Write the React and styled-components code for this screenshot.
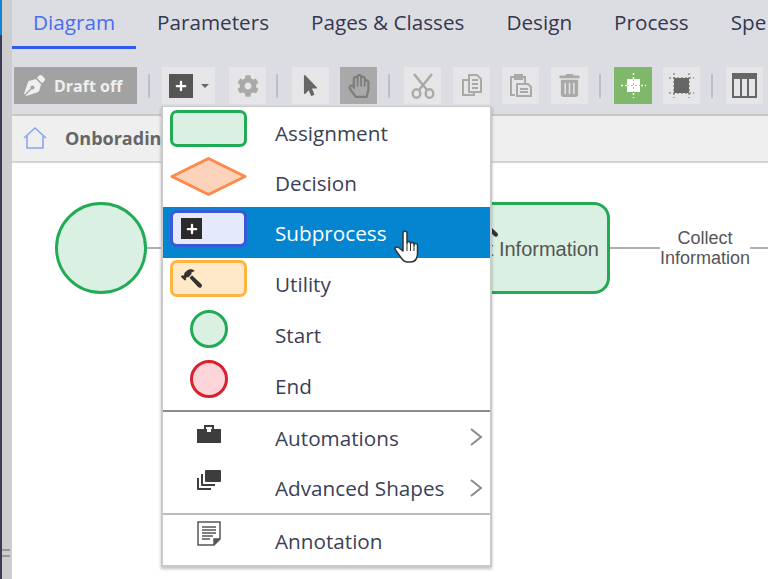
import React from 'react';
import styled, { createGlobalStyle } from 'styled-components';
import { FaPenNib, FaCog, FaMousePointer, FaRegHandPaper, FaTrashAlt, FaPlus, FaHammer } from 'react-icons/fa';

const GlobalStyle = createGlobalStyle`
  html, body {
    margin: 0;
    padding: 0;
    background: #fff;
    font-family: "Open Sans", "Liberation Sans", sans-serif;
  }
`;

const Page = styled.div`
  position: relative;
  display: flex;
  width: 768px;
  height: 579px;
  overflow: hidden;
`;

const Rail = styled.div`
  flex: 0 0 12px;
  box-sizing: border-box;
  border-left: 2px solid #3b3b55;
  background: #cdcdcd;
  display: flex;
  flex-direction: column;
  justify-content: flex-end;
  gap: 4px;
  padding: 0 2px 22px 0;
  i {
    display: block;
    height: 2px;
    background: #999;
  }
`;

const RailTop = styled.div`
  position: absolute;
  left: 0;
  top: 0;
  width: 2px;
  height: 35px;
  background: #0b84d8;
`;

const Main = styled.div`
  flex: 1;
  min-width: 0;
  display: flex;
  flex-direction: column;
`;

const TabBar = styled.div`
  display: flex;
  height: 49px;
  background: #dcdde3;
  white-space: nowrap;
`;

const Tab = styled.div`
  padding: 5px 21px 0;
  font-size: 20.7px;
  line-height: 34px;
  color: ${(p) => (p.$active ? '#4a6cf0' : '#34384f')};
  border-bottom: 3px solid ${(p) => (p.$active ? '#2f5bf0' : 'transparent')};
  box-sizing: border-box;
  height: 49px;
`;

const Toolbar = styled.div`
  display: flex;
  align-items: center;
  height: 67px;
  box-sizing: border-box;
  padding: 19px 0 11px 2px;
  background: #dcdde3;
  border-bottom: 2px solid #c8c8c8;
  white-space: nowrap;
`;

const DraftButton = styled.div`
  display: flex;
  align-items: center;
  gap: 9px;
  width: 123px;
  height: 37px;
  box-sizing: border-box;
  padding-left: 10px;
  background: #a2a2a2;
  color: #efefef;
  font-size: 16px;
  font-weight: 700;
`;

const Separator = styled.span`
  flex: none;
  width: 2px;
  height: 24px;
  margin: 0 ${(p) => p.$right ?? 12}px 0 ${(p) => p.$left ?? 11}px;
  background: #b9bfcc;
`;

const ToolButton = styled.div`
  flex: none;
  display: flex;
  align-items: center;
  justify-content: center;
  width: ${(p) => p.$width ?? 37}px;
  height: 37px;
  margin-right: ${(p) => p.$gap ?? 11}px;
  background: ${(p) => p.$bg ?? '#e6e6e8'};
  color: ${(p) => p.$color ?? '#a9a9a9'};
`;

const AddGlyph = styled.span`
  display: flex;
  align-items: center;
  justify-content: center;
  width: 24px;
  height: 24px;
  background: #555;
  color: #fff;
`;

const Caret = styled.span`
  margin-left: 8px;
  border-left: 4px solid transparent;
  border-right: 4px solid transparent;
  border-top: 4px solid #666;
`;

const Breadcrumb = styled.div`
  display: flex;
  align-items: center;
  gap: 18px;
  height: 47px;
  flex: none;
  box-sizing: border-box;
  padding: 0 0 2px 11px;
  background: #efefef;
  border-bottom: 2px solid #d4d4d4;
  font-size: 18px;
  font-weight: 700;
  color: #666;
  white-space: nowrap;
`;

const Canvas = styled.div`
  position: relative;
  flex: 1;
  background: #fff;
`;

const StartNode = styled.div`
  position: absolute;
  left: 43px;
  top: 39px;
  width: 92px;
  height: 92px;
  box-sizing: border-box;
  border-radius: 50%;
  border: 3px solid #22ab55;
  background: #daf0e2;
`;

const Connector = styled.div`
  position: absolute;
  left: ${(p) => p.$left}px;
  width: ${(p) => p.$width}px;
  top: 84px;
  height: 2px;
  background: #b0b0b0;
`;

const StepNode = styled.div`
  position: absolute;
  left: 420px;
  top: 39px;
  width: 178px;
  height: 92px;
  box-sizing: border-box;
  display: flex;
  align-items: center;
  justify-content: flex-end;
  padding: 2px 8px 0 0;
  border-radius: 16px;
  border: 3px solid #22ab55;
  background: #daf0e2;
  font-family: "Liberation Sans", Arial, sans-serif;
  font-size: 20px;
  color: #555;
  white-space: nowrap;
`;

const StepGlyph = styled.span`
  position: absolute;
  left: 42px;
  top: 12px;
  color: #333;
  display: flex;
  transform: scaleX(-1);
`;

const ConnectorLabel = styled.div`
  position: absolute;
  left: 638px;
  top: 65px;
  width: 110px;
  text-align: center;
  font-family: "Liberation Sans", Arial, sans-serif;
  font-size: 18px;
  line-height: 20px;
  color: #555;
`;

const Menu = styled.div`
  position: absolute;
  left: 161px;
  top: 106px;
  width: 331px;
  box-sizing: border-box;
  background: #fff;
  border: 2px solid #c9c9c9;
  border-top-width: 1px;
  box-shadow: 0 2px 3px rgba(0, 0, 0, 0.25);
`;

const Row = styled.div`
  display: flex;
  align-items: center;
  height: ${(p) => p.$h ?? 51}px;
  box-sizing: border-box;
  background: ${(p) => (p.$active ? '#0585d0' : 'transparent')};
  color: ${(p) => (p.$active ? '#fff' : '#3b3f56')};
  font-size: 20.7px;
  border-top: ${(p) => (p.$divider ? `2px solid ${p.$divider}` : '0')};
`;

const Slot = styled.div`
  flex: 0 0 112px;
  box-sizing: border-box;
  display: flex;
  justify-content: center;
  padding: 0 28px 0 7px;
  margin-bottom: ${(p) => p.$up ?? 9}px;
`;

const Label = styled.span`
  flex: 1;
  margin-top: 1px;
`;

const Chevron = styled.svg`
  width: 14px;
  height: 18px;
  margin-right: 7px;
  fill: none;
  stroke: #8a8a8a;
  stroke-width: 2;
`;

const Shape = styled.div`
  flex: none;
  display: flex;
  align-items: center;
  box-sizing: border-box;
  width: ${(p) => p.$w ?? 77}px;
  height: ${(p) => p.$h ?? 37}px;
  padding-left: 8px;
  border-radius: ${(p) => p.$radius ?? 7}px;
  border: 3px solid ${(p) => p.$line};
  background: ${(p) => p.$fill};
  color: #333;
`;

const PlusBox = styled.span`
  display: flex;
  align-items: center;
  justify-content: center;
  width: 21px;
  height: 21px;
  background: #2b2b2b;
  color: #fff;
`;

const FlippedHammer = styled(FaHammer)`
  transform: scaleX(-1);
`;

const HandCursor = styled.svg`
  position: absolute;
  left: 394px;
  top: 230px;
  width: 28px;
  height: 34px;
`;

const ScissorsIcon = () => (
  <svg width="24" height="26" viewBox="0 0 24 26" fill="none" stroke="#a9a9a9" strokeWidth="2.4">
    <path d="M3 1 16 17M21 1 8 17" />
    <ellipse cx="5.500" cy="20.500" rx="3.800" ry="4.300" />
    <ellipse cx="18.500" cy="20.500" rx="3.800" ry="4.300" />
  </svg>
);

const CopyIcon = () => (
  <svg width="25" height="25" viewBox="0 0 25 25" fill="none" stroke="#a9a9a9" strokeWidth="2">
    <path d="M10 2h8l4 4v13H10z" />
    <path d="M10 7H4v15h11v-3" />
    <path d="M13 7h6M13 11h6M13 15h6" />
  </svg>
);

const PasteIcon = () => (
  <svg width="25" height="25" viewBox="0 0 25 25" fill="none" stroke="#a9a9a9" strokeWidth="2">
    <path d="M7 22H3V4h4M14 4h3v6" />
    <path d="M7 2h7v4H7z" fill="#a9a9a9" />
    <path d="M9 11h11l3 3v9H9z" />
    <path d="M12 16h8M12 19h8" />
  </svg>
);

const SnapIcon = () => (
  <svg width="25" height="25" viewBox="0 0 25 25">
    <rect x="6" y="6" width="13" height="13" fill="#fff" />
    <path d="M12.500 0v25M0 12.500h25" stroke="#fff" strokeWidth="1.500" strokeDasharray="2 2" />
    <path d="M12.500 6v13M6 12.500h13" stroke="#a9d39a" strokeWidth="1" strokeDasharray="2 2" />
  </svg>
);

const BoundsIcon = () => (
  <svg width="25" height="25" viewBox="0 0 25 25">
    <rect x="5" y="5" width="15" height="15" fill="#666" />
    <path d="M5 0v25M20 0v25M0 5h25M0 20h25" stroke="#666" strokeWidth="1" strokeDasharray="2 2" />
  </svg>
);

const TableIcon = () => (
  <svg width="25" height="25" viewBox="0 0 25 25" fill="none" stroke="#666" strokeWidth="2">
    <rect x="1" y="1" width="23" height="23" />
    <path d="M1 3h23M1 5h23M9 6v18M16 6v18" />
  </svg>
);

const HomeIcon = () => (
  <svg width="24" height="22" viewBox="0 0 24 22" fill="none" stroke="#8aa8ee" strokeWidth="1.600">
    <path d="M1 11 12 1l11 10" />
    <path d="M4 9v12h16V9" />
  </svg>
);

const Diamond = () => (
  <svg width="77" height="39" viewBox="0 0 77 39">
    <path d="M38.500 1.500 75 19.500 38.500 37.500 2 19.500z" fill="#fdd2bb" stroke="#fb8a4c" strokeWidth="3" strokeLinejoin="round" />
  </svg>
);

const CaseIcon = () => (
  <svg width="24" height="19" viewBox="0 0 24 19" fill="#3d3d3d">
    <path d="M7 5V1h10v4h-2V3H9v2z" />
    <path d="M0 5h10v3h4V5h10v14H0z" />
  </svg>
);

const StackIcon = () => (
  <svg width="24" height="21" viewBox="0 0 24 21" fill="#3d3d3d">
    <rect x="8" y="0" width="16" height="12" rx="1" />
    <path d="M6 4v10h12v2H5a1 1 0 0 1-1-1V4z" />
    <path d="M2 8v10h12v2H1a1 1 0 0 1-1-1V8z" />
  </svg>
);

const NoteIcon = () => (
  <svg width="24" height="25" viewBox="0 0 24 25" fill="none" stroke="#555" strokeWidth="1.500">
    <path d="M1 1h22v17l-6 6H1z" />
    <path d="M23 18h-6v6" fill="#555" />
    <path d="M5 6h14M5 9h14M5 12h14M5 15h11M5 18h8" />
  </svg>
);

const tabs = ['Diagram', 'Parameters', 'Pages & Classes', 'Design', 'Process', 'Spe'];

const MoreArrow = () => (
  <Chevron viewBox="0 0 14 18">
    <path d="M2 1l10 8-10 8" />
  </Chevron>
);

export default function App() {
  return (
    <Page>
      <GlobalStyle />
      <RailTop />
      <Rail>
        <i />
        <i />
      </Rail>
      <Main>
        <TabBar>
          {tabs.map((t, i) => (
            <Tab key={t} $active={i === 0}>{t}</Tab>
          ))}
        </TabBar>
        <Toolbar>
          <DraftButton><FaPenNib size={21} />Draft off</DraftButton>
          <Separator />
          <ToolButton $width={53} $gap={14}>
            <AddGlyph><FaPlus size={12} /></AddGlyph>
            <Caret />
          </ToolButton>
          <ToolButton $gap={0}><FaCog size={22} /></ToolButton>
          <Separator $left={10} $right={14} />
          <ToolButton $color="#666"><FaMousePointer size={21} /></ToolButton>
          <ToolButton $bg="#a9a9a9" $color="#7d7d7d" $gap={0}><FaRegHandPaper size={24} /></ToolButton>
          <Separator $right={14} />
          <ToolButton $gap={12}><ScissorsIcon /></ToolButton>
          <ToolButton $gap={12}><CopyIcon /></ToolButton>
          <ToolButton $gap={12}><PasteIcon /></ToolButton>
          <ToolButton $gap={0}><FaTrashAlt size={23} /></ToolButton>
          <Separator $right={13} />
          <ToolButton $bg="#7fb86a" $width={38}><SnapIcon /></ToolButton>
          <ToolButton $gap={0}><BoundsIcon /></ToolButton>
          <Separator $right={13} />
          <ToolButton $gap={0}><TableIcon /></ToolButton>
        </Toolbar>
        <Breadcrumb><HomeIcon />Onborading</Breadcrumb>
        <Canvas>
          <StartNode />
          <Connector $left={135} $width={20} />
          <StepNode>
            <StepGlyph><FaHammer size={21} /></StepGlyph>
            Collect Information
          </StepNode>
          <Connector $left={598} $width={50} />
          <ConnectorLabel>Collect<br />Information</ConnectorLabel>
          <Connector $left={738} $width={18} />
        </Canvas>
      </Main>
      <Menu>
        <Row $h={50}>
          <Slot $up={7}><Shape $line="#22ab55" $fill="#daf0e2" /></Slot>
          <Label>Assignment</Label>
        </Row>
        <Row $h={50}>
          <Slot $up={12}><Diamond /></Slot>
          <Label>Decision</Label>
        </Row>
        <Row $active>
          <Slot $up={8}>
            <Shape $line="#3b58d8" $fill="#e4eafb"><PlusBox><FaPlus size={12} /></PlusBox></Shape>
          </Slot>
          <Label>Subprocess</Label>
        </Row>
        <Row>
          <Slot $up={10}>
            <Shape $line="#ffb340" $fill="#ffe9c8"><FlippedHammer size={21} /></Shape>
          </Slot>
          <Label>Utility</Label>
        </Row>
        <Row>
          <Slot $up={12}><Shape $w={38} $h={38} $radius={19} $line="#22ab55" $fill="#daf0e2" /></Slot>
          <Label>Start</Label>
        </Row>
        <Row $h={50}>
          <Slot $up={12}><Shape $w={38} $h={38} $radius={19} $line="#d9202f" $fill="#fdd5d8" /></Slot>
          <Label>End</Label>
        </Row>
        <Row $divider="#8c8c8c" $h={52}>
          <Slot $up={8}><CaseIcon /></Slot>
          <Label>Automations</Label>
          <MoreArrow />
        </Row>
        <Row>
          <Slot $up={14}><StackIcon /></Slot>
          <Label>Advanced Shapes</Label>
          <MoreArrow />
        </Row>
        <Row $divider="#bdbdbd" $h={52}>
          <Slot $up={14}><NoteIcon /></Slot>
          <Label>Annotation</Label>
        </Row>
      </Menu>
      <HandCursor viewBox="0 0 28 34">
        <path
          d="M9 3c0-2.500 4-2.500 4 0v10c0-2 3.500-2 3.500 0v1c0-2 3.500-2 3.500 0v1c0-2 3.500-2 3.500 0v8c0 5-2 9-7 9h-3c-3 0-5-2-7-5l-5-7c-1.500-2 1-4 3-2.500L9 21z"
          fill="#fff"
          stroke="#333"
          strokeWidth="1.500"
          strokeLinejoin="round"
        />
        <path d="M13 13v8M16.500 14v7M20 15v6" stroke="#333" strokeWidth="1" fill="none" />
      </HandCursor>
    </Page>
  );
}
